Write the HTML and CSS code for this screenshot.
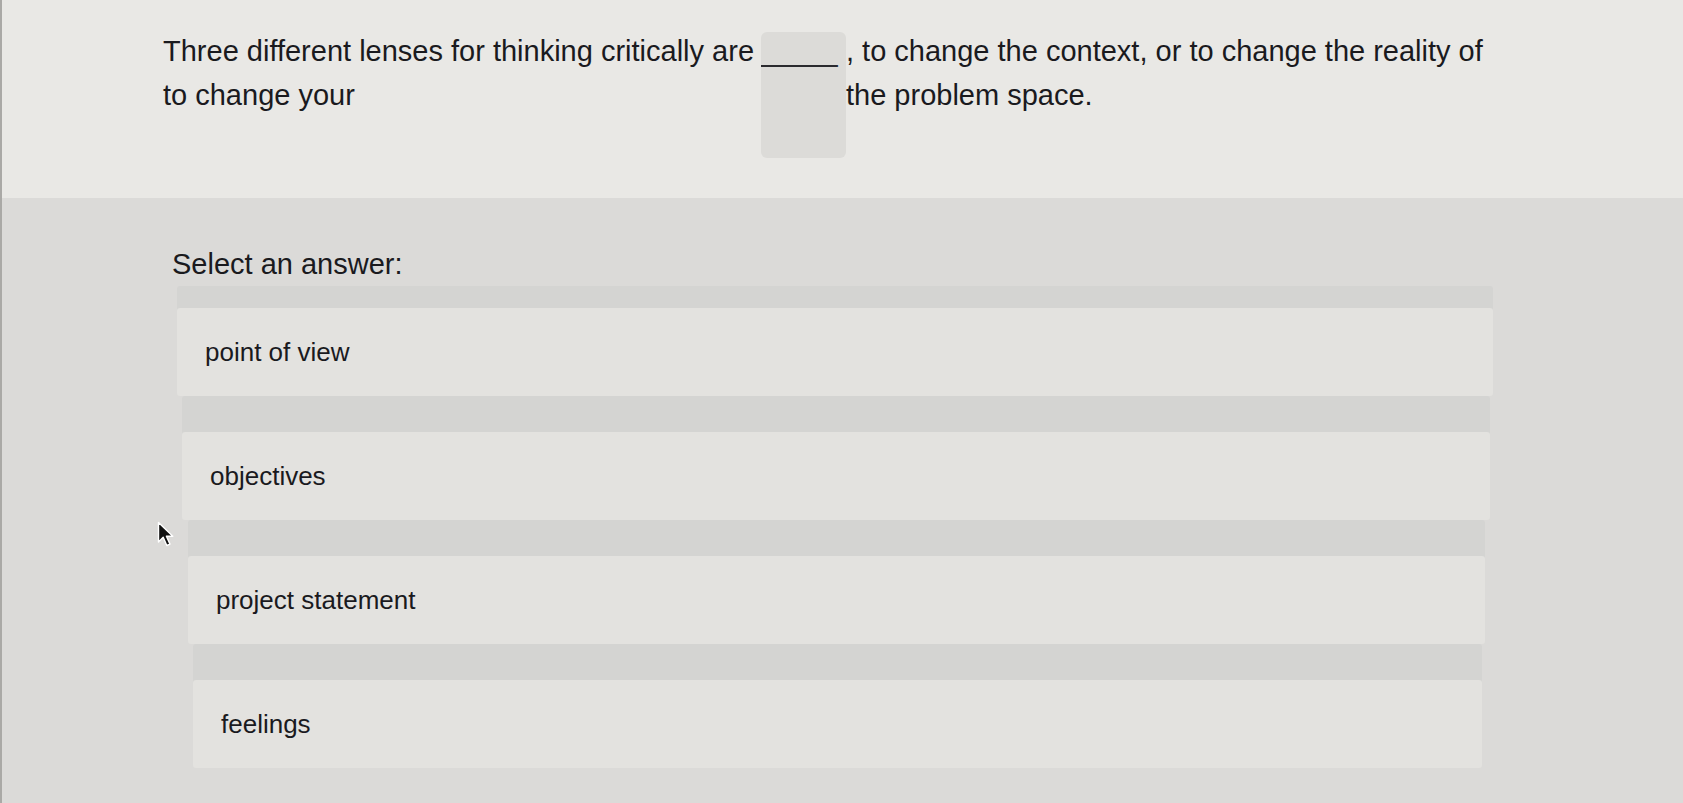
FILE: index.html
```html
<!DOCTYPE html>
<html lang="en">
<head>
    <meta charset="UTF-8">
    <meta name="viewport" content="width=device-width, initial-scale=1.0">
    <title>Question</title>
    <link rel="stylesheet" href="styles.css">
</head>
<body>
<div class="page">

    <!-- Question prompt with the blank -->
    <section class="question">
        <div class="prompt">
            <span class="prompt-lead">Three different lenses for thinking critically are to change your</span>
            <span class="blank">_____</span>
            <span class="prompt-tail">, to change the context, or to change the reality of the problem space.</span>
        </div>
    </section>

    <!-- Answer choices -->
    <section class="answers">
        <h2 class="answers-label">Select an answer:</h2>
        <ul class="choices">
            <li class="choice">point of view</li>
            <li class="choice">objectives</li>
            <li class="choice">project statement</li>
            <li class="choice">feelings</li>
        </ul>
    </section>

    <svg class="cursor" width="17" height="27" viewBox="0 0 17 27">
        <path d="M1.5 1.5 L1.5 21 L6.2 16.3 L9.8 24.5 L13 23.1 L9.4 15.2 L15.8 15.2 Z" fill="#111" stroke="#fff" stroke-width="1.4" stroke-linejoin="round"/>
    </svg>
</div>
</body>
</html>
```

FILE: styles.css
```css
html, body {
    margin: 0;
    padding: 0;
}
body {
    font-family: "Liberation Sans", Arial, sans-serif;
    color: #1a1a1e;
    background-color: #dbdad8;
    border-left: 2px solid #aaa9a6;
    height: 803px;
    overflow: hidden;
}
.page {
    position: relative;
    height: 100%;
}

.question {
    background-color: #e9e8e5;
    height: 198px;
    box-sizing: border-box;
    padding: 29px 0 0 161px;
}
.prompt {
    display: flex;
    align-items: flex-start;
    width: 1332px;
    font-size: 29px;
    line-height: 44px;
}
.prompt-lead {
    flex: none;
    width: 598px;
}
.blank {
    flex: none;
    width: 85px;
    height: 126px;
    margin-top: 3px;
    line-height: 38px;
    letter-spacing: -1px;
    background-color: #dcdbd8;
    border-radius: 6px;
    color: #2a2a2e;
    overflow: hidden;
}
.prompt-tail {
    flex: 1;
    min-width: 0;
}

.answers {
    padding: 44px 0 0 170px;
}
.answers-label {
    margin: 0;
    font-size: 29px;
    font-weight: normal;
    line-height: 44px;
}
.choices {
    list-style: none;
    margin: 0 0 0 5px;
    padding: 22px 0 0;
    width: 1316px;
    display: flex;
    flex-direction: column;
    gap: 36px;
}
.choice {
    height: 88px;
    display: flex;
    align-items: center;
    padding: 0 28px;
    background-color: #e3e2df;
    border-radius: 3px;
    font-size: 26px;
    /* darker strip in the gap above each row */
    box-shadow: 0 -36px 0 0 #d4d4d2;
}
.choice:first-child {
    box-shadow: 0 -22px 0 0 #d4d4d2;
}
/* the photo leans a little, so the lower rows sit further right */
.choice:nth-child(2) {
    margin: 0 3px 0 5px;
}
.choice:nth-child(3) {
    margin: 0 8px 0 11px;
}
.choice:nth-child(4) {
    margin: 0 11px 0 16px;
}

.cursor {
    position: absolute;
    left: 155px;
    top: 521px;
}
```
